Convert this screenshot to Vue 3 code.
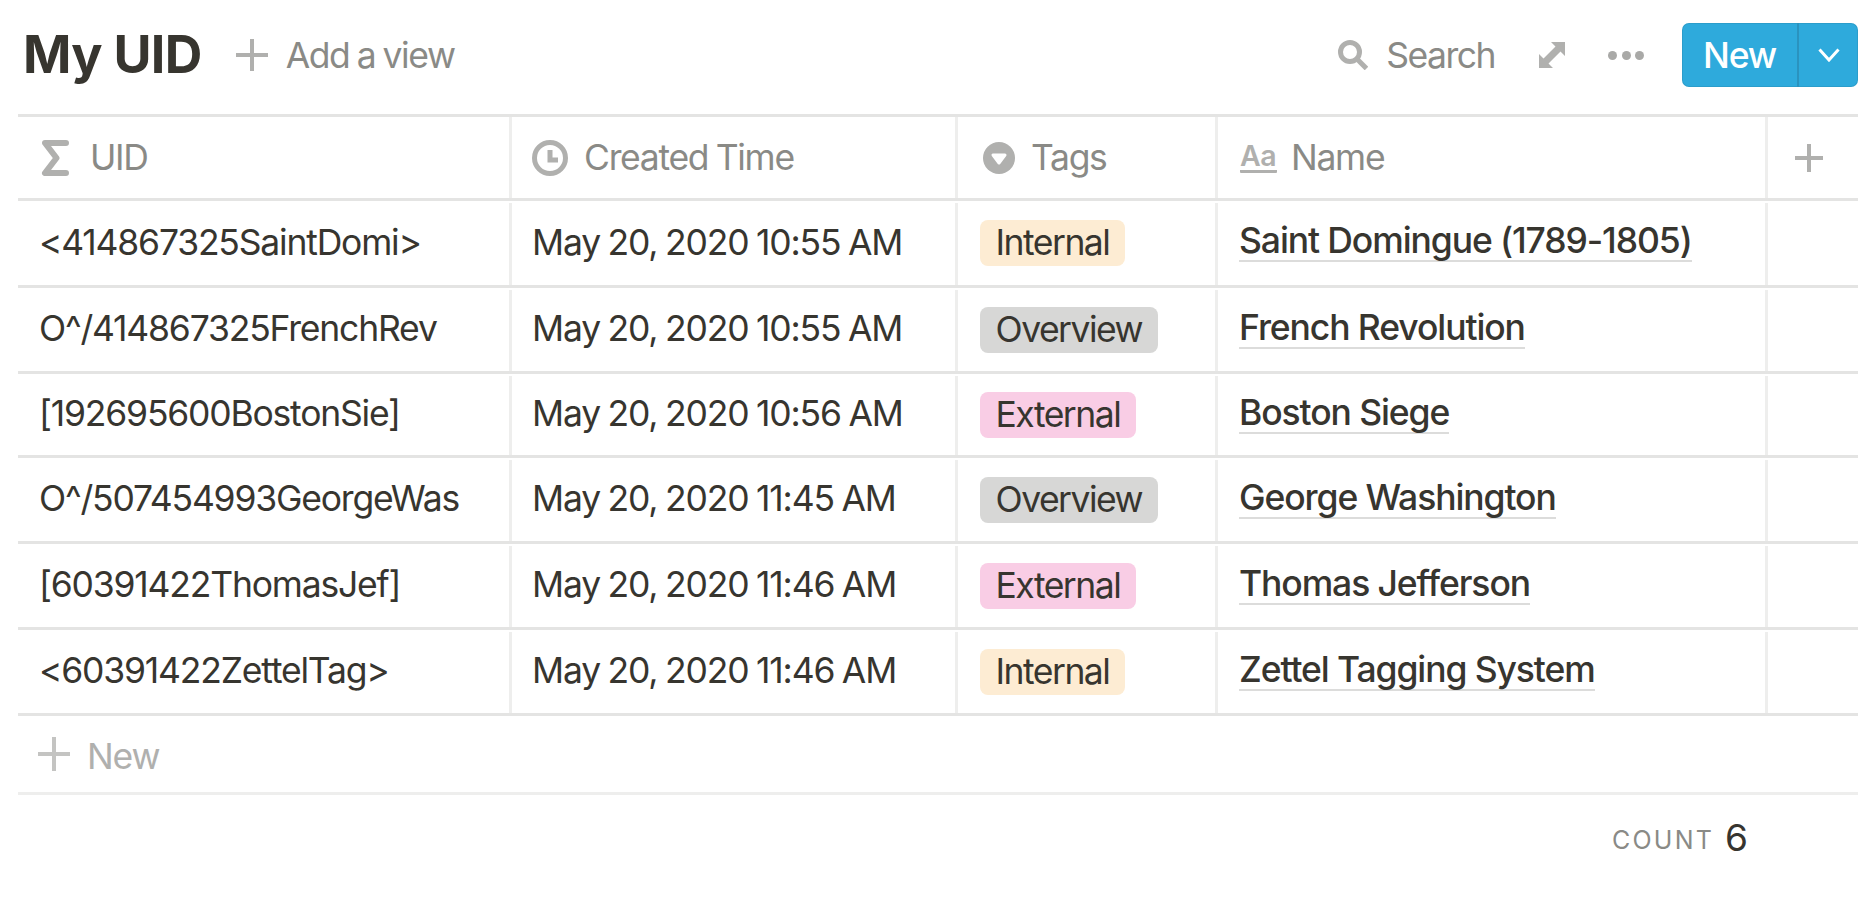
<script setup>
const rows = [
  { uid: '<414867325SaintDomi>', time: 'May 20, 2020 10:55 AM', tag: 'Internal', name: 'Saint Domingue (1789-1805)', h: 87 },
  { uid: 'O^/414867325FrenchRev', time: 'May 20, 2020 10:55 AM', tag: 'Overview', name: 'French Revolution', h: 86 },
  { uid: '[192695600BostonSie]', time: 'May 20, 2020 10:56 AM', tag: 'External', name: 'Boston Siege', h: 84 },
  { uid: 'O^/507454993GeorgeWas', time: 'May 20, 2020 11:45 AM', tag: 'Overview', name: 'George Washington', h: 86 },
  { uid: '[60391422ThomasJef]', time: 'May 20, 2020 11:46 AM', tag: 'External', name: 'Thomas Jefferson', h: 86 },
  { uid: '<60391422ZettelTag>', time: 'May 20, 2020 11:46 AM', tag: 'Internal', name: 'Zettel Tagging System', h: 86 },
]
</script>

<template>
  <div class="page">
    <div class="toolbar">
      <div class="left">
        <h1 class="title">My UID</h1>
        <svg class="plus-view" viewBox="0 0 32 32"><path d="M16 0v32M0 16h32" /></svg>
        <span class="add">Add a view</span>
      </div>
      <div class="right">
        <svg class="search" viewBox="0 0 30 30"><circle cx="12" cy="12" r="9.500" /><path d="M18.500 18.500l10 10" /></svg>
        <span class="search-text">Search</span>
        <svg class="expand" viewBox="0 0 26 26"><path class="fill" d="M12 0h14v14l-4.500-4.500L9.500 21.500 14 26H0V12l4.500 4.500 12-12z" /></svg>
        <span class="dots"><i></i><i></i><i></i></span>
        <div class="btn">
          <span class="btn-main">New</span>
          <span class="btn-arrow"><svg viewBox="0 0 22 14"><path d="M1.500 1.500 11 12l9.500-10.500" /></svg></span>
        </div>
      </div>
    </div>

    <div class="table">
      <div class="row head">
        <div class="cell c1">
          <svg class="hicon sigma" viewBox="0 0 28 36"><path d="M25 3H4L15.500 18 4 33H25" /></svg>
          <span>UID</span>
        </div>
        <div class="cell c2">
          <svg class="hicon clock" viewBox="0 0 36 36"><circle cx="18" cy="18" r="15.500" /><path d="M18 10v10h8" /></svg>
          <span>Created Time</span>
        </div>
        <div class="cell c3">
          <svg class="hicon select" viewBox="0 0 32 32"><circle class="fill" cx="16" cy="16" r="16" /><path class="cut" d="M10 13h12l-6 8z" /></svg>
          <span>Tags</span>
        </div>
        <div class="cell c4">
          <span class="aa">Aa</span>
          <span>Name</span>
        </div>
        <div class="cell c5">
          <svg class="hplus" viewBox="0 0 28 28"><path d="M14 0v28M0 14h28" /></svg>
        </div>
      </div>

      <div v-for="r in rows" :key="r.uid" class="row body" :style="{ height: r.h + 'px' }">
        <div class="cell c1">{{ r.uid }}</div>
        <div class="cell c2">{{ r.time }}</div>
        <div class="cell c3"><span class="tag" :class="r.tag.toLowerCase()">{{ r.tag }}</span></div>
        <div class="cell c4"><span class="link">{{ r.name }}</span></div>
        <div class="cell c5"></div>
      </div>

      <div class="new-row">
        <svg class="new-plus" viewBox="0 0 32 34"><path d="M16 0v34M0 17h32" /></svg>
        <span>New</span>
      </div>

      <div class="foot">
        <span class="count">COUNT</span>
        <span class="num">6</span>
      </div>
    </div>
  </div>
</template>

<style>
html, body { margin: 0; background: #fff; }
</style>

<style scoped>
.page {
  width: 1876px;
  height: 906px;
  box-sizing: border-box;
  padding: 0 18px;
  font-family: Inter, "Liberation Sans", sans-serif;
  font-size: 35.500px;
  letter-spacing: -1.150px;
  word-spacing: -1.300px;
  color: #37352f;
  overflow: hidden;
  background: #fff;
}
svg { display: block; flex: none; fill: none; stroke: #b0b0ae; stroke-width: 4; }
svg .fill { fill: #b0b0ae; stroke: none; }
.toolbar {
  height: 114px;
  display: flex;
  justify-content: space-between;
  align-items: center;
  padding: 0 0 4px 5px;
  box-sizing: border-box;
}
.left, .right { display: flex; align-items: center; }
.title { margin: 0; font-size: 52px; font-weight: 700; letter-spacing: -0.700px; word-spacing: 0; line-height: 60px; }
.plus-view { width: 32px; height: 32px; margin-left: 34px; }
.add { margin-left: 18px; color: #8a8a86; letter-spacing: -1.400px; }
.search { width: 30px; height: 30px; stroke-width: 5; }
.search-text { margin-left: 18px; color: #8a8a86; letter-spacing: -1.500px; }
.expand { width: 26px; height: 26px; margin-left: 44px; }
.dots { display: flex; gap: 4.500px; margin-left: 43px; }
.dots i { width: 9px; height: 9px; border-radius: 50%; background: #a9a9a7; }
.btn {
  display: flex;
  width: 176px;
  height: 64px;
  margin-left: 38px;
  border-radius: 7px;
  background: #2eaadc;
  box-shadow: inset 0 0 0 1px rgba(15, 15, 15, 0.08);
  color: #fff;
  overflow: hidden;
}
.btn-main {
  width: 115px;
  display: flex; align-items: center; justify-content: center;
  font-weight: 500;
  border-right: 2px solid #2a93bf;
}
.btn-arrow { flex: 1; display: flex; align-items: center; justify-content: center; }
.btn-arrow svg { width: 22px; height: 14px; stroke: #fff; stroke-width: 3; }

.table { border-top: 3px solid #e4e4e3; width: 1840px; }
.row { display: flex; box-sizing: border-box; border-bottom: 3px solid #e4e4e3; }
.head { height: 84px; color: #8a8a86; letter-spacing: -1.300px; }
.cell {
  box-sizing: border-box;
  display: flex;
  align-items: center;
  padding-left: 21px;
  white-space: nowrap;
  border-right: 3px solid #eeeeed;
}
.body .cell { margin-top: 2px; padding-bottom: 2px; }
.body .c1, .body .c2 { padding-bottom: 4px; }
.body .c1 { letter-spacing: -1.200px; }
.c1 { width: 494px; }
.c2 { width: 446px; padding-left: 20px; }
.c3 { width: 260px; padding-left: 22px; }
.c4 { width: 550px; padding-left: 21px; }
.c5 { flex: 1; border-right: 0; }
.sigma { width: 28px; height: 36px; margin: 0 21px 0 2px; stroke-width: 6; stroke-linejoin: round; stroke-linecap: round; }
.clock { width: 36px; height: 36px; margin-right: 16px; stroke-width: 5; }
.select { width: 32px; height: 32px; margin: 0 16px 0 3px; }
.select .cut { fill: #fff; stroke: #fff; stroke-width: 3; stroke-linejoin: round; }
.aa {
  box-sizing: border-box;
  width: 37px;
  margin: 0 14px 0 1px;
  padding-bottom: 2px;
  border-bottom: 3px solid #b0b0ae;
  border-radius: 1px;
  color: #b0b0ae;
  font-size: 28.500px;
  font-weight: 600;
  letter-spacing: -0.500px;
  line-height: 25px;
}
.hplus { width: 28px; height: 28px; margin-left: 6px; }
.tag {
  display: inline-block;
  height: 46px;
  line-height: 46px;
  padding: 0 15.500px;
  border-radius: 8px;
  letter-spacing: -1.500px;
}
.internal { background: #fdecd3; }
.overview { background: #d7d7d6; }
.external { background: #f9cde5; }
.link { font-weight: 500; letter-spacing: -1.100px; word-spacing: 0; border-bottom: 2px solid #dcdcdb; line-height: 38px; margin-top: -2px; }
.new-row {
  height: 79px;
  display: flex;
  align-items: center;
  box-sizing: border-box;
  border-bottom: 3px solid #eeeeed;
  padding-left: 20px;
  color: #b0b0ae;
}
.new-plus { width: 32px; height: 34px; stroke: #c4c4c2; }
.new-row span { margin-left: 17px; padding-top: 4px; }
.foot {
  display: flex;
  justify-content: flex-end;
  align-items: center;
  padding: 20px 110px 0 0;
}
.count { font-size: 25px; letter-spacing: 2.200px; word-spacing: 0; color: #8a8a86; padding-top: 5px; }
.num { margin-left: 11px; font-size: 37px; letter-spacing: 0; }
</style>
